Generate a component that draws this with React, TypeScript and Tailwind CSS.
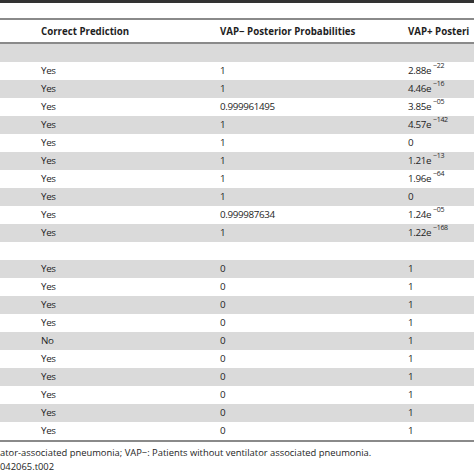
type Row = { pred: string; neg: string; pos: string; exp?: string } | null

const rows: Row[] = [
  null,
  { pred: 'Yes', neg: '1', pos: '2.88e', exp: '−22' },
  { pred: 'Yes', neg: '1', pos: '4.46e', exp: '−16' },
  { pred: 'Yes', neg: '0.999961495', pos: '3.85e', exp: '−05' },
  { pred: 'Yes', neg: '1', pos: '4.57e', exp: '−142' },
  { pred: 'Yes', neg: '1', pos: '0' },
  { pred: 'Yes', neg: '1', pos: '1.21e', exp: '−13' },
  { pred: 'Yes', neg: '1', pos: '1.96e', exp: '−64' },
  { pred: 'Yes', neg: '1', pos: '0' },
  { pred: 'Yes', neg: '0.999987634', pos: '1.24e', exp: '−05' },
  { pred: 'Yes', neg: '1', pos: '1.22e', exp: '−168' },
  null,
  { pred: 'Yes', neg: '0', pos: '1' },
  { pred: 'Yes', neg: '0', pos: '1' },
  { pred: 'Yes', neg: '0', pos: '1' },
  { pred: 'Yes', neg: '0', pos: '1' },
  { pred: 'No', neg: '0', pos: '1' },
  { pred: 'Yes', neg: '0', pos: '1' },
  { pred: 'Yes', neg: '0', pos: '1' },
  { pred: 'Yes', neg: '0', pos: '1' },
  { pred: 'Yes', neg: '0', pos: '1' },
  { pred: 'Yes', neg: '0', pos: '1' },
]

export default function App() {
  return (
    <div
      className="w-[474px] h-[474px] overflow-hidden bg-white text-[#1e1e1e] flex flex-col"
      style={{ fontFamily: '"Open Sans", "DejaVu Sans", sans-serif' }}
    >
      <div className="h-[3px] bg-[#333] shrink-0" />
      <div className="h-[15px] shrink-0" />
      <div className="h-[2px] bg-[#8a8a8a] shrink-0" />
      {/* header */}
      <div className="h-[22px] shrink-0 grid grid-cols-[179px_188px_1fr] pl-[41px] pt-[2px] items-center text-[9.7px] font-bold whitespace-nowrap overflow-hidden">
        <span>Correct Prediction</span>
        <span>VAP− Posterior Probabilities</span>
        <span>VAP+ Posteri</span>
      </div>
      <div className="h-[2px] bg-[#8a8a8a] shrink-0" />
      {rows.map((r, i) => (
        <div
          key={i}
          className={
            'h-[18px] shrink-0 grid grid-cols-[179px_188px_1fr] pl-[41px] items-center text-[9.8px] tracking-[-0.35px] whitespace-nowrap ' +
            (i % 2 === 0 ? 'bg-[#dadada]' : 'bg-white')
          }
        >
          {r && (
            <>
              <span>{r.pred}</span>
              <span>{r.neg}</span>
              <span className="flex items-start">
                {r.pos}
                {r.exp && <span className="text-[7px] leading-none ml-[2px] mt-[-2px]">{r.exp}</span>}
              </span>
            </>
          )}
        </div>
      ))}
      <div className="h-[2px] bg-[#8a8a8a] shrink-0" />
      <div className="pt-[4px] text-[9.4px] leading-[14px] whitespace-nowrap">
        <div>ator-associated pneumonia; VAP−: Patients without ventilator associated pneumonia.</div>
        <div>042065.t002</div>
      </div>
    </div>
  )
}
